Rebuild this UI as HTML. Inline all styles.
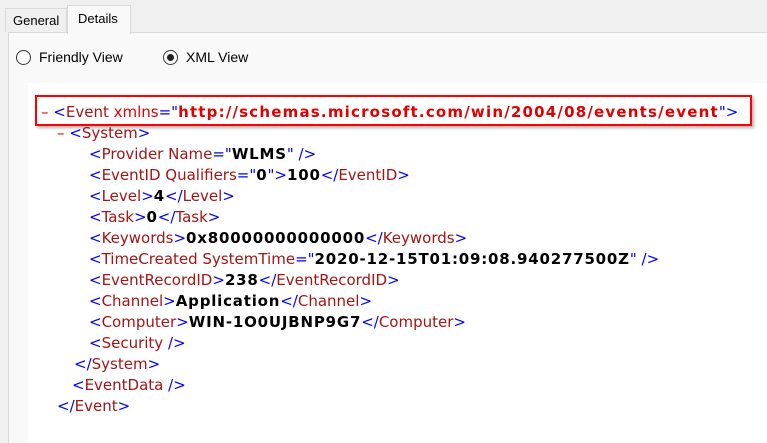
<!DOCTYPE html>
<html><head><style>
body{margin:0;width:767px;height:430px;background:#f0f0f0;position:relative;overflow:hidden;font-family:"DejaVu Sans",Verdana,sans-serif;}
.tab{position:absolute;font-family:"Liberation Sans",sans-serif;font-size:13px;color:#000;}
#panel{position:absolute;left:8px;top:32px;width:770px;height:410px;border-left:1px solid #d9d9d9;border-top:1px solid #d9d9d9;background:#f9f9f9;}
#xml{position:absolute;left:28px;top:83px;width:760px;height:360px;background:#fff;}
.l{position:absolute;font-size:15px;white-space:pre;line-height:18px;color:#a31515;}
.b{color:#0000ff}.v{color:#000;font-weight:bold;letter-spacing:0.8px}.m{color:#e00000}
b.m{letter-spacing:1.2px}
.r{position:absolute;font-family:"Liberation Sans",sans-serif;font-size:14px;}
.rad{position:absolute;width:13px;height:13px;border:1px solid #333;border-radius:50%;background:#fff;}
</style></head><body>
<div id="panel"></div>
<div class="tab" style="left:5px;top:8px;width:60px;height:23px;background:#f0f0f0;border:1px solid #d9d9d9;border-bottom:none;"><span style="position:absolute;left:7px;top:4px">General</span></div>
<div class="tab" style="left:67px;top:5px;width:62px;height:28px;background:#f9f9f9;border:1px solid #d9d9d9;border-bottom:none;"><span style="position:absolute;left:10px;top:5px">Details</span></div>
<div class="rad" style="left:16px;top:50px"></div>
<div class="r" style="left:39px;top:49px">Friendly View</div>
<div class="rad" style="left:163px;top:50px"><div style="position:absolute;left:3px;top:3px;width:7px;height:7px;border-radius:50%;background:#222"></div></div>
<div class="r" style="left:186px;top:49px">XML View</div>
<div id="xml"></div>
<div style="position:absolute;left:35px;top:95px;width:713px;height:27px;border:2px solid #f00;box-shadow:2px 2px 3px rgba(0,0,0,.3);"></div>
<div class="l" style="left:41px;top:103px"><span class="m">– </span><span class="b">&lt;</span>Event <span class="m">xmlns</span><span class="b">="</span><b class="m">http://schemas.microsoft.com/win/2004/08/events/event</b><span class="b">"&gt;</span></div>
<div class="l" style="left:57px;top:124px"><span class="m">– </span><span class="b">&lt;</span>System<span class="b">&gt;</span></div>
<div class="l" style="left:89px;top:145px"><span class="b">&lt;</span>Provider Name<span class="b">="</span><span class="v">WLMS</span><span class="b">" /&gt;</span></div>
<div class="l" style="left:89px;top:166px"><span class="b">&lt;</span>EventID Qualifiers<span class="b">="</span><span class="v">0</span><span class="b">"&gt;</span><span class="v">100</span><span class="b">&lt;/</span>EventID<span class="b">&gt;</span></div>
<div class="l" style="left:89px;top:187px"><span class="b">&lt;</span>Level<span class="b">&gt;</span><span class="v">4</span><span class="b">&lt;/</span>Level<span class="b">&gt;</span></div>
<div class="l" style="left:89px;top:208px"><span class="b">&lt;</span>Task<span class="b">&gt;</span><span class="v">0</span><span class="b">&lt;/</span>Task<span class="b">&gt;</span></div>
<div class="l" style="left:89px;top:229px"><span class="b">&lt;</span>Keywords<span class="b">&gt;</span><span class="v">0x80000000000000</span><span class="b">&lt;/</span>Keywords<span class="b">&gt;</span></div>
<div class="l" style="left:89px;top:250px"><span class="b">&lt;</span>TimeCreated SystemTime<span class="b">="</span><span class="v">2020-12-15T01:09:08.940277500Z</span><span class="b">" /&gt;</span></div>
<div class="l" style="left:89px;top:271px"><span class="b">&lt;</span>EventRecordID<span class="b">&gt;</span><span class="v">238</span><span class="b">&lt;/</span>EventRecordID<span class="b">&gt;</span></div>
<div class="l" style="left:89px;top:292px"><span class="b">&lt;</span>Channel<span class="b">&gt;</span><span class="v">Application</span><span class="b">&lt;/</span>Channel<span class="b">&gt;</span></div>
<div class="l" style="left:89px;top:313px"><span class="b">&lt;</span>Computer<span class="b">&gt;</span><span class="v">WIN-1O0UJBNP9G7</span><span class="b">&lt;/</span>Computer<span class="b">&gt;</span></div>
<div class="l" style="left:89px;top:334px"><span class="b">&lt;</span>Security <span class="b">/&gt;</span></div>
<div class="l" style="left:74px;top:355px"><span class="b">&lt;/</span>System<span class="b">&gt;</span></div>
<div class="l" style="left:72px;top:376px"><span class="b">&lt;</span>EventData <span class="b">/&gt;</span></div>
<div class="l" style="left:57px;top:397px"><span class="b">&lt;/</span>Event<span class="b">&gt;</span></div>
</body></html>
